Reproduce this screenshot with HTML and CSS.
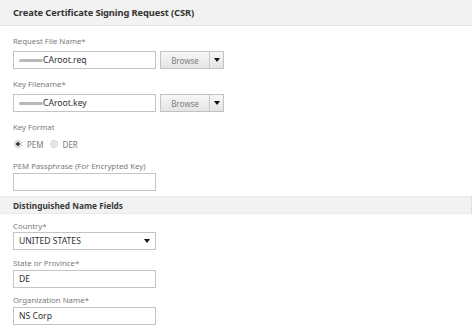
FILE: index.html
```html
<!DOCTYPE html>
<html>
<head>
<meta charset="utf-8">
<link rel="stylesheet" href="styles.css">
</head>
<body>
<div class="page">
  <div class="header"><span class="title">Create Certificate Signing Request (CSR)</span></div>
  <div class="section">
    <div class="field f1">
      <label class="lbl">Request File Name*</label>
      <div class="row">
        <div class="input"><span class="blur"></span>CAroot.req</div>
        <div class="browse"><span class="bmain">Browse</span><span class="barrow"><span class="tri"></span></span></div>
      </div>
    </div>
    <div class="field f2">
      <label class="lbl">Key Filename*</label>
      <div class="row">
        <div class="input"><span class="blur"></span>CAroot.key</div>
        <div class="browse"><span class="bmain">Browse</span><span class="barrow"><span class="tri"></span></span></div>
      </div>
    </div>
    <div class="field f3">
      <label class="lbl">Key Format</label>
      <div class="radios">
        <span class="radio on"></span><span class="rtext">PEM</span>
        <span class="radio off"></span><span class="rtext">DER</span>
      </div>
    </div>
    <div class="field f4">
      <label class="lbl tight">PEM Passphrase (For Encrypted Key)</label>
      <div class="input"></div>
    </div>
  </div>
  <div class="subhead"><span class="subtitle">Distinguished Name Fields</span></div>
  <div class="section">
    <div class="field f5">
      <label class="lbl flush">Country*</label>
      <div class="input select"><span>UNITED STATES</span><span class="tri"></span></div>
    </div>
    <div class="field f6">
      <label class="lbl tight">State or Province*</label>
      <div class="input">DE</div>
    </div>
    <div class="field f7">
      <label class="lbl tight">Organization Name*</label>
      <div class="input">NS Corp</div>
    </div>
  </div>
</div>
</body>
</html>
```
FILE: styles.css
```css
html, body {
  margin: 0;
  padding: 0;
  background: #ffffff;
}
body {
  font-family: "Noto Sans", "Open Sans", sans-serif;
  color: #333;
}
.page {
  width: 472px;
}
.header {
  height: 25px;
  background: #f2f2f2;
  border-bottom: 1px solid #e2e2e2;
  display: flex;
  align-items: center;
  padding-left: 13px;
}
.title {
  font-weight: 700;
  font-size: 9.3px;
  color: #333;
  letter-spacing: -0.1px;
}
.section {
  padding-left: 13px;
}
.field {
  display: flex;
  flex-direction: column;
}
.f1 { margin-top: 9px; }
.f2 { margin-top: 9px; }
.f3 { margin-top: 9px; }
.f4 { margin-top: 10px; }
.f5 { margin-top: 6px; }
.f6 { margin-top: 7px; }
.f7 { margin-top: 6px; }
.lbl {
  display: block;
  font-size: 7.8px;
  line-height: 12px;
  height: 12px;
  color: #7a7a7a;
  margin-bottom: 4px;
  white-space: nowrap;
}
.lbl.tight { margin-bottom: 1px; }
.lbl.flush { margin-bottom: 0; }
.row {
  display: flex;
  gap: 4px;
  height: 18px;
}
.input {
  box-sizing: border-box;
  width: 143px;
  height: 18px;
  border: 1px solid #c4c4c4;
  background: #fff;
  font-size: 8.6px;
  line-height: 16px;
  color: #303030;
  padding-left: 5px;
  display: flex;
  align-items: center;
  white-space: nowrap;
}
.blur {
  flex: 0 0 24px;
  width: 24px;
  height: 3px;
  background: #b8b8b8;
  border-radius: 2px;
  filter: blur(0.6px);
}
.browse {
  box-sizing: border-box;
  width: 64px;
  height: 18px;
  border: 1px solid #c2c2c2;
  background: linear-gradient(#f7f7f7, #e4e4e4);
  display: flex;
}
.bmain {
  flex: 1;
  font-size: 8px;
  color: #808080;
  display: flex;
  align-items: center;
  justify-content: center;
}
.barrow {
  width: 13px;
  border-left: 1px solid #c8c8c8;
  display: flex;
  align-items: center;
  justify-content: center;
}
.tri {
  width: 0;
  height: 0;
  border-left: 3px solid transparent;
  border-right: 3px solid transparent;
  border-top: 4px solid #111;
}
.radios {
  margin-top: 1px;
  height: 12px;
  display: flex;
  align-items: center;
}
.radio {
  box-sizing: border-box;
  width: 8px;
  height: 8px;
  border-radius: 50%;
  margin-left: 1px;
  flex: 0 0 8px;
}
.radio.on {
  border: 1px solid #c6c6c6;
  background: radial-gradient(circle, #444 0 1.6px, #f4f4f4 2.2px);
}
.radio.off {
  border: 1px solid #cfcfcf;
  background: radial-gradient(circle, #e4e4e4 0 2px, #f6f6f6 3px);
  margin-left: 6px;
}
.rtext {
  font-size: 8px;
  color: #7a7a7a;
  margin-left: 5px;
}
.subhead {
  margin-top: 5px;
  box-sizing: border-box;
  height: 18px;
  background: #f2f2f2;
  border-top: 1px solid #ebebeb;
  border-bottom: 1px solid #ebebeb;
  border-right: 1px solid #e0e0e0;
  display: flex;
  align-items: center;
  padding-left: 13px;
}
.subtitle {
  font-weight: 700;
  font-size: 8.3px;
  color: #3a3a3a;
}
.select {
  justify-content: space-between;
  padding-right: 5px;
}
```
